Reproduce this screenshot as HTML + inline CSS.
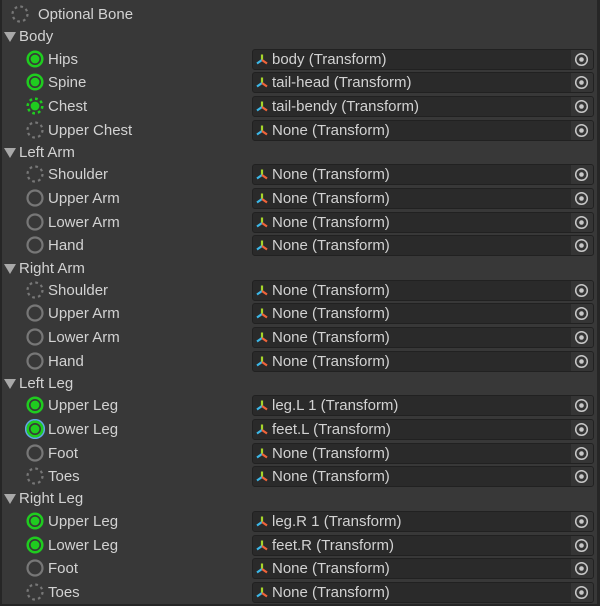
<!DOCTYPE html>
<html><head><meta charset="utf-8">
<style>
html,body{margin:0;padding:0}
body{width:600px;height:606px;background:#383838;position:relative;overflow:hidden;font-family:"Liberation Sans",sans-serif;font-size:15px;color:#d2d2d2}
.frame{position:absolute;left:0;top:0;width:600px;height:606px;box-sizing:border-box;border-left:2px solid #262626;border-right:3px solid #262626;border-bottom:2px solid #262626}
.lbl{position:absolute;line-height:20px;white-space:nowrap}
.ic{position:absolute;left:25px;width:20px;height:20px}
.cat{position:absolute;left:19px;line-height:20px}
.tri{position:absolute;left:4px;width:0;height:0;border-left:6px solid transparent;border-right:6px solid transparent;border-top:10px solid #a8a8a8}
.f{position:absolute;left:252px;width:342px;height:21px;background:#2a2a2a;border:1px solid #212121;border-radius:3px;box-sizing:border-box}
.f .t{position:absolute;left:19px;top:0;line-height:20px;color:#d2d2d2}
.f .x{position:absolute;left:2px;top:3px}
.f .b{position:absolute;right:0;top:0;width:22px;height:19px;background:#353535;border-radius:0 2px 2px 0}
.f .b svg{position:absolute;left:3px;top:2px}
</style></head><body>
<div class="frame"></div>
<div id="c"></div>
<script>
const G='#1fcc1f',Gd='#777';
function circ(type){
 let s='<svg width="20" height="20" viewBox="0 0 20 20">';
 if(type=='sel') s+='<circle cx="10" cy="10" r="9.3" fill="none" stroke="#5ea8e6" stroke-width="1.6"/>';
 if(type=='g'||type=='sel'){s+='<circle cx="10" cy="10" r="7.3" fill="none" stroke="'+G+'" stroke-width="2.5"/><circle cx="10" cy="10" r="4.4" fill="'+G+'"/>';}
 else if(type=='gd'){s+='<circle cx="10" cy="10" r="7.3" fill="none" stroke="'+G+'" stroke-width="2.5" stroke-dasharray="2.7 3"/><circle cx="10" cy="10" r="4.4" fill="'+G+'"/>';}
 else if(type=='d'){s+='<circle cx="10" cy="10" r="7.5" fill="none" stroke="'+Gd+'" stroke-width="2.2" stroke-dasharray="2.7 3.2"/>';}
 else if(type=='o'){s+='<circle cx="10" cy="10" r="7.5" fill="none" stroke="'+Gd+'" stroke-width="2.2"/>';}
 return s+'</svg>';
}
const tr='<svg width="14" height="14" viewBox="0 0 14 14"><path d="M7 7V1.5" stroke="#a6d62a" stroke-width="2.2"/><path d="M7 7L2 10.5" stroke="#3cb8e8" stroke-width="2.2"/><path d="M7 7L12 10.5" stroke="#f0643a" stroke-width="2.2"/></svg>';
const tg='<svg width="15" height="15" viewBox="0 0 15 15"><circle cx="7.5" cy="7.5" r="5.8" fill="none" stroke="#c8c8c8" stroke-width="1.5"/><circle cx="7.5" cy="7.5" r="2.3" fill="#c8c8c8"/></svg>';
const rows=[
['bone',14,'d','Optional Bone',null],
['cat',36,'Body'],
['bone',59,'g','Hips','body'],
['bone',82,'g','Spine','tail-head'],
['bone',106,'gd','Chest','tail-bendy'],
['bone',130,'d','Upper Chest','None'],
['cat',152,'Left Arm'],
['bone',174,'d','Shoulder','None'],
['bone',198,'o','Upper Arm','None'],
['bone',222,'o','Lower Arm','None'],
['bone',245,'o','Hand','None'],
['cat',268,'Right Arm'],
['bone',290,'d','Shoulder','None'],
['bone',313,'o','Upper Arm','None'],
['bone',337,'o','Lower Arm','None'],
['bone',361,'o','Hand','None'],
['cat',383,'Left Leg'],
['bone',405,'g','Upper Leg','leg.L 1'],
['bone',429,'sel','Lower Leg','feet.L'],
['bone',453,'o','Foot','None'],
['bone',476,'d','Toes','None'],
['cat',498,'Right Leg'],
['bone',521,'g','Upper Leg','leg.R 1'],
['bone',545,'g','Lower Leg','feet.R'],
['bone',568,'o','Foot','None'],
['bone',592,'d','Toes','None'],
];
let h='';
for(const r of rows){
 if(r[0]=='cat'){
  h+='<div class="tri" style="top:'+(r[1]-4)+'px"></div><div class="cat" style="top:'+(r[1]-9)+'px">'+r[2]+'</div>';
 } else {
  const y=r[1];
  const lx = r[3]=='Optional Bone'?38:48;
  const ix = r[3]=='Optional Bone'?10:25;
  h+='<div class="ic" style="left:'+ix+'px;top:'+(y-10)+'px">'+circ(r[2])+'</div><div class="lbl" style="left:'+lx+'px;top:'+(y-9)+'px">'+r[3]+'</div>';
  if(r[4]) h+='<div class="f" style="top:'+(y-10)+'px"><span class="x">'+tr+'</span><span class="t">'+r[4]+' (Transform)</span><span class="b">'+tg+'</span></div>';
 }
}
document.getElementById('c').innerHTML=h;
</script>
</body></html>
